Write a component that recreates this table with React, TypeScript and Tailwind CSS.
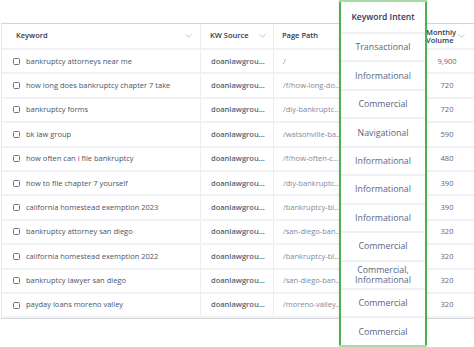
import React from 'react'

type Row = {
  keyword: string
  path: string
  volume: string
}

const ROWS: Row[] = [
  { keyword: 'bankruptcy attorneys near me',         path: '/',                     volume: '9,900' },
  { keyword: 'how long does bankruptcy chapter 7 take', path: '/f/how-long-do...',  volume: '720' },
  { keyword: 'bankruptcy forms',                     path: '/diy-bankruptc...',     volume: '720' },
  { keyword: 'bk law group',                         path: '/watsonville-ba...',    volume: '590' },
  { keyword: 'how often can i file bankruptcy',      path: '/f/how-often-c...',     volume: '480' },
  { keyword: 'how to file chapter 7 yourself',       path: '/diy-bankruptc...',     volume: '390' },
  { keyword: 'california homestead exemption 2023',  path: '/bankruptcy-bl...',     volume: '390' },
  { keyword: 'bankruptcy attorney san diego',        path: '/san-diego-ban...',     volume: '320' },
  { keyword: 'california homestead exemption 2022',  path: '/bankruptcy-bl...',     volume: '320' },
  { keyword: 'bankruptcy lawyer san diego',          path: '/san-diego-ban...',     volume: '320' },
  { keyword: 'payday loans moreno valley',           path: '/moreno-valley...',     volume: '320' },
]

const INTENTS = [
  'Transactional',
  'Informational',
  'Commercial',
  'Navigational',
  'Informational',
  'Informational',
  'Informational',
  'Commercial',
  'Commercial, Informational',
  'Commercial',
  'Commercial',
]

function Chevron() {
  return (
    <svg className="w-[7px] h-[4px] text-[#a3aab8]" viewBox="0 0 7 4" fill="none" stroke="currentColor" strokeWidth={0.7}>
      <path d="M0.5 0.5L3.5 3.2L6.5 0.5" />
    </svg>
  )
}

export default function App() {
  return (
    <div className="relative w-[474px] h-[347px] overflow-hidden bg-white font-['Open_Sans',sans-serif]">
      <div className="h-[23px]" />

      {/* Table */}
      <div className="ml-[1px] border-t-[1.5px] border-t-[#d2d5da] border-b border-b-[#d3d6db] border-l border-l-[#e3e6ea]">
        {/* Header */}
        <div className="flex h-[26px] border-b-2 border-[#f0f2f5] text-[7.5px] font-semibold text-[#2e3852]">
          <div className="w-[199px] flex items-center justify-between pl-[14px] pr-[8px] border-r border-[#eceef2]">
            <span>Keyword</span>
            <Chevron />
          </div>
          <div className="w-[73px] flex items-center justify-between pl-[9px] pr-[7px] border-r border-[#eceef2]">
            <span>KW Source</span>
            <Chevron />
          </div>
          <div className="w-[72px] flex items-center pl-[8px]">
            <span>Page Path</span>
          </div>
          <div className="w-[77px]" />
          <div className="flex-1 flex items-center justify-between pl-[2px] pr-[9px] border-l border-[#eceef2]">
            <span className="leading-[8px]">Monthly<br />Volume</span>
            <Chevron />
          </div>
        </div>

        {/* Rows */}
        {ROWS.map((row) => (
          <div key={row.keyword} className="flex h-[24.4px] border-b-2 border-[#f0f2f5] text-[7.5px]">
            <div className="w-[199px] flex items-center gap-[6px] pl-[11px] border-r border-[#eceef2] text-[#4a5469]">
              <div className="w-[7px] h-[7px] border border-[#6d7588] rounded-[1.5px]" />
              <span>{row.keyword}</span>
            </div>
            <div className="w-[73px] flex items-center pl-[10px] border-r border-[#eceef2] font-semibold text-[#586276]">
              doanlawgrou...
            </div>
            <div className="w-[72px] flex items-center pl-[9px] text-[#7f889a] whitespace-nowrap overflow-hidden">
              {row.path}
            </div>
            <div className="w-[77px]" />
            <div className="flex-1 flex items-center border-l border-[#eceef2] text-[#5d667a]">
              <span className="w-[46px] text-center">{row.volume}</span>
            </div>
          </div>
        ))}
      </div>

      {/* Keyword Intent overlay */}
      <div className="absolute left-[339px] top-0 w-[88px] h-[347px] flex flex-col bg-white border-x-2 border-[#4caf50] shadow-[0_0_4px_rgba(0,0,0,0.08)]">
        <div className="h-[2px] bg-[#a8dba9] -mx-[2px]" />
        <div className="h-[30px] flex items-center justify-center text-[8.5px] font-semibold text-[#2e3852]">
          Keyword Intent
        </div>
        {INTENTS.map((intent, i) => (
          <div
            key={i}
            className="h-[28.45px] flex items-center justify-center border-t-2 border-[#eef0f3] text-center text-[8.8px] leading-[10px] text-[#5b6680]"
          >
            {intent === 'Commercial, Informational' ? (
              <span>Commercial,<br />Informational</span>
            ) : (
              intent
            )}
          </div>
        ))}
        <div className="flex-1 bg-[#a8dba9] -mx-[2px]" />
      </div>
    </div>
  )
}
